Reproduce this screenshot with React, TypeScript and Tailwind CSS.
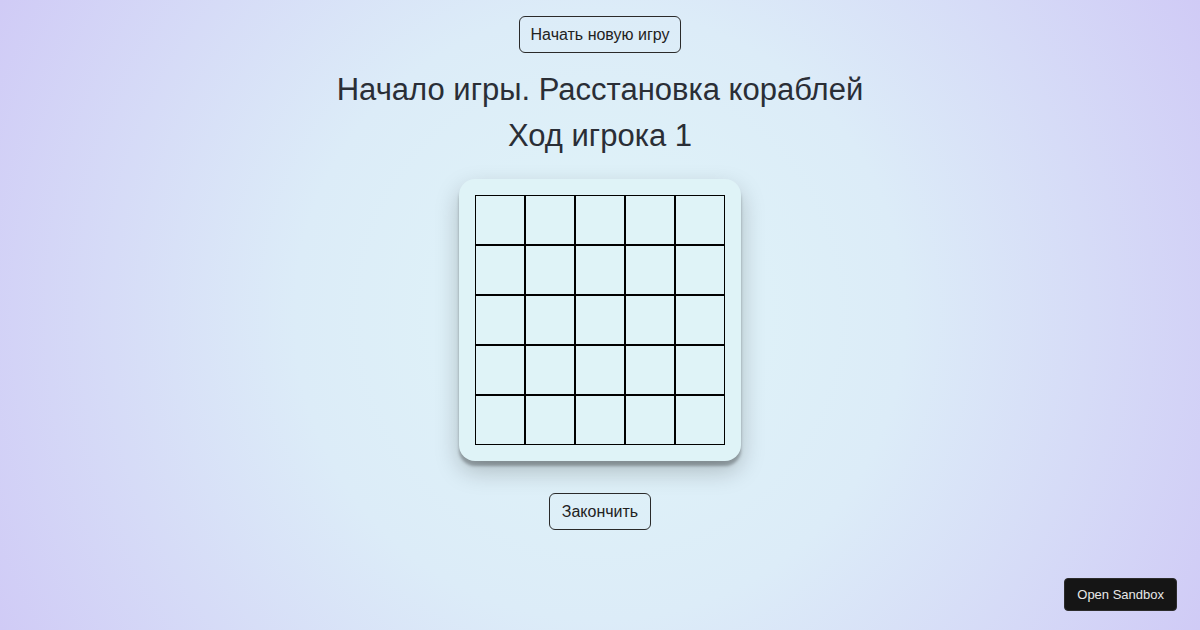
import React from 'react';

const SIZE = 5;

export default function App() {
  const cells = Array.from({ length: SIZE * SIZE }, (_, i) => i);

  return (
    <div
      className="min-h-screen w-full flex flex-col items-center pt-[16px] text-[#2a2e36] bg-[radial-gradient(circle,#e0f5f8_0%,#dcecf8_45%,#d0cbf6_100%)]"
      style={{ fontFamily: '"Liberation Sans", Arial, sans-serif' }}
    >
      {/* верхняя кнопка */}
      <button className="h-[37px] px-[11px] rounded-md border border-[#2a2a2a] text-[16px] text-[#222] bg-transparent">
        Начать новую игру
      </button>

      {/* заголовки */}
      <div className="mt-[14px] text-center text-[31px] leading-[46px] font-normal">
        <h1>Начало игры. Расстановка кораблей</h1>
        <h2>Ход игрока 1</h2>
      </div>

      {/* поле */}
      <div className="mt-[20px] p-4 rounded-2xl bg-[#dff3f7] shadow-[0_5px_3px_rgba(0,0,0,0.28),0_10px_24px_rgba(0,0,0,0.22)]">
        <div className="w-[250px] flex flex-wrap">
          {cells.map((i) => (
            <div key={i} className="w-[50px] h-[50px] border border-black" />
          ))}
        </div>
      </div>

      <button className="mt-[32px] h-[37px] px-3 rounded-md border border-[#2a2a2a] text-[16px] text-[#222] bg-transparent">
        Закончить
      </button>

      <button className="fixed bottom-[19px] right-[23px] h-[33px] px-3 rounded-[4px] bg-[#151515] border border-[#2c2c2c] text-[13px] text-[#e8e8e8]">
        Open Sandbox
      </button>
    </div>
  );
}
